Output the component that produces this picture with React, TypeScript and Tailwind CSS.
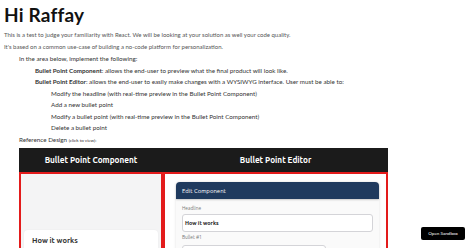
import React from "react";

const raleway = { fontFamily: "Lato, 'Noto Sans', sans-serif" };

export default function App() {
  return (
    <div
      className="w-[474px] h-[248px] overflow-hidden bg-white relative font-['Lato','Noto_Sans',sans-serif]"
    >
      <div className="pl-[4px] pt-[4px]">
        <h1 className="text-[19px] leading-[22px] font-bold text-[#111] tracking-[0.2px]">Hi Raffay</h1>
        <p className="mt-[3px] text-[6px] leading-[12px] text-[#555]">
          This is a test to judge your familiarity with React. We will be looking at your solution as well your code quality.
        </p>
        <p className="text-[6px] leading-[12px] text-[#555]">
          It's based on a common use-case of building a no-code platform for personalization.
        </p>
      </div>

      <div className="pl-[19px] text-[6.25px] leading-[11.5px] text-[#333]">
        <p>In the area below, implement the following:</p>
        <div className="pl-[16px]">
          <p>
            <span className="font-bold">Bullet Point Component</span>: allows the end-user to preview what the final product will look like.
          </p>
          <p>
            <span className="font-bold">Bullet Point Editor</span>: allows the end-user to easily make changes with a WYSIWYG interface. User must be able to:
          </p>
          <div className="pl-[16px]">
            <p>Modify the headline (with real-time preview in the Bullet Point Component)</p>
            <p>Add a new bullet point</p>
            <p>Modify a bullet point (with real-time preview in the Bullet Point Component)</p>
            <p>Delete a bullet point</p>
          </div>
        </div>
        <p>
          Reference Design <span className="text-[4.5px]">(click to view):</span>
        </p>
      </div>

      <div className="ml-[19px] mt-[2px] w-[369px] font-['Ubuntu','Open_Sans',sans-serif]">
        <div className="h-[24px] bg-[#1b1b1b] flex items-center text-white font-bold text-[8.2px]">
          <div className="w-[144px] text-center">Bullet Point Component</div>
          <div className="flex-1 text-center">Bullet Point Editor</div>
        </div>
        <div className="flex h-[100px]">
          <div className="w-[145px] border-2 border-[#e31b1b] bg-[#f4f4f5] flex flex-col pt-[56px] px-[3px]">
            <div className="bg-white rounded-[4px] h-[40px] px-[8px] pt-[5px] text-[7.5px] font-bold text-[#333] shadow-[0_0_2px_rgba(0,0,0,0.05)]">
              How it works
            </div>
          </div>
          <div className="flex-1 border-2 border-[#e31b1b] bg-white pt-[8px] pl-[11px] pr-[7px]">
            <div className="rounded-[4px] bg-[#fafafa] shadow-[0_0_3px_rgba(0,0,0,0.12)] h-[80px]">
              <div className="h-[17px] bg-[#1f3a5e] rounded-t-[4px] text-white text-[6px] flex items-center px-[6px] shadow-[0_1px_2px_rgba(0,0,0,0.2)]">
                Edit Component
              </div>
              <div className="px-[6px] pt-[6px] text-[4.8px] text-[#777]">
                <div className="leading-[8px]">Headline</div>
                <div className="h-[18px] mt-[1px] w-[191px] border border-[#d4d4d8] rounded-[3px] bg-white flex items-center px-[2px] text-[5.5px] font-bold text-[#222]">
                  How it works
                </div>
                <div className="leading-[8px] mt-[2px]">Bullet #1</div>
                <div className="flex items-start mt-[3px]">
                  <div className="h-[18px] w-[144px] border border-[#d4d4d8] rounded-[3px] bg-white" />
                  <div className="ml-[22px] mt-[3px] h-[14px] w-[22px] rounded-[2px] bg-[#cfcfd4]" />
                </div>
              </div>
            </div>
          </div>
        </div>
      </div>

      <div className="absolute left-[421px] top-[227px] w-[44px] h-[13px] bg-black rounded-[2px] text-white text-[4.6px] flex items-center justify-center" style={raleway}>
        Open Sandbox
      </div>
    </div>
  );
}
